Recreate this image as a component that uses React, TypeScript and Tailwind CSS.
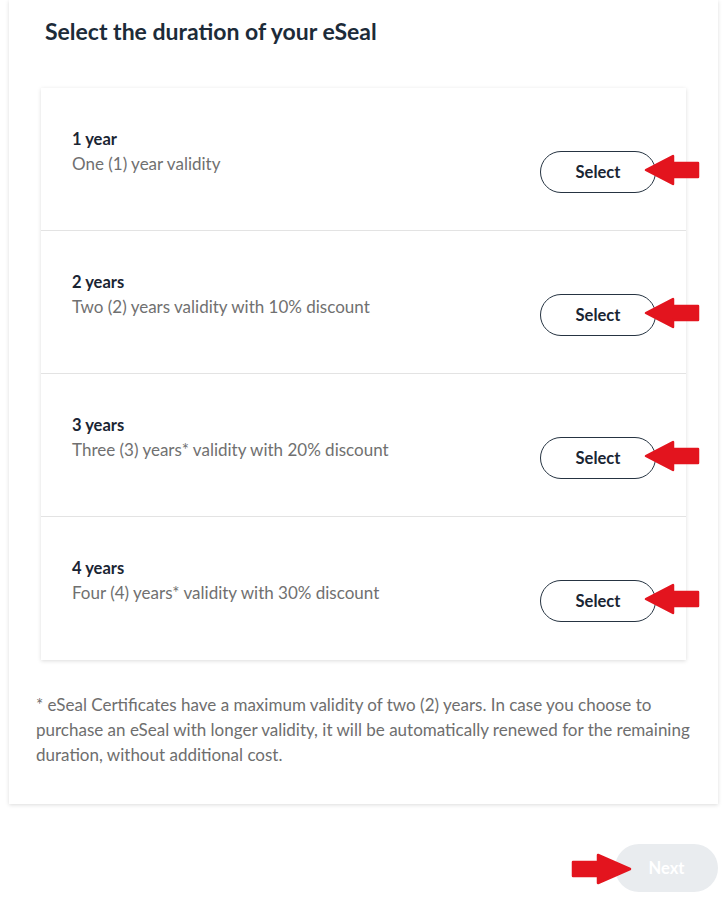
import React from 'react';

const OPTIONS = [
  { title: '1 year', desc: 'One (1) year validity' },
  { title: '2 years', desc: 'Two (2) years validity with 10% discount' },
  { title: '3 years', desc: 'Three (3) years* validity with 20% discount' },
  { title: '4 years', desc: 'Four (4) years* validity with 30% discount' },
];

const LeftArrow = () => (
  <svg width="56" height="32" viewBox="0 0 56 32" className="absolute left-[104px] top-[3px] pointer-events-none">
    <polygon points="2,16 29,2 29,9 54,9 54,23 29,23 29,30" fill="#e3141e" stroke="#e3141e" strokeWidth="2.5" strokeLinejoin="round" />
  </svg>
);

const RightArrow = () => (
  <svg width="62" height="32" viewBox="0 0 62 32" className="absolute left-[-44px] top-[9px] pointer-events-none">
    <polygon points="2,9 27,9 27,2 59,16 27,30 27,23 2,23" fill="#e3141e" stroke="#e3141e" strokeWidth="2.5" strokeLinejoin="round" />
  </svg>
);

export default function App() {
  return (
    <div className="min-h-screen bg-white font-['Lato','Noto_Sans',sans-serif]">
      <div className="ml-[9px] w-[709px] bg-white shadow-[0_1px_4px_rgba(0,0,0,0.14)] pt-[15px] pb-[37px]">
        <h1 className="pl-[36px] text-[23px] leading-[32px] font-bold text-[#1c2b39]">
          Select the duration of your eSeal
        </h1>

        <div className="mx-[32px] mt-[41px] bg-white shadow-[0_1px_4px_rgba(0,0,0,0.14)]">
          {OPTIONS.map((o, i) => (
            <div
              key={o.title}
              className={`flex h-[143px] justify-between pl-[31px] pr-[30px] ${i < OPTIONS.length - 1 ? 'border-b border-[#e3e3e3]' : ''}`}
            >
              <div className="pt-[39px]">
                <div className="text-[16.5px] leading-[24px] font-bold text-[#1a2533]">{o.title}</div>
                <div className="text-[17px] leading-[25px] text-[#707070]">{o.desc}</div>
              </div>
              <div className="relative mt-[63px] h-[42px]">
                <button className="h-[42px] w-[116px] rounded-full border border-[#263442] bg-white text-[16.5px] font-bold text-[#1a2533]">
                  Select
                </button>
                <LeftArrow />
              </div>
            </div>
          ))}
        </div>

        <p className="mt-[32px] pl-[27px] pr-[12px] text-[17px] leading-[25px] text-[#6e6e6e]">
          * eSeal Certificates have a maximum validity of two (2) years. In case you choose to purchase an eSeal with
          longer validity, it will be automatically renewed for the remaining duration, without additional cost.
        </p>
      </div>

      <div className="flex justify-end w-[718px] mt-[40px]">
        <div className="relative">
          <button className="h-[48px] w-[103px] rounded-full bg-[#e9ecef] text-[16.5px] font-bold text-white">
            Next
          </button>
          <RightArrow />
        </div>
      </div>
    </div>
  );
}
